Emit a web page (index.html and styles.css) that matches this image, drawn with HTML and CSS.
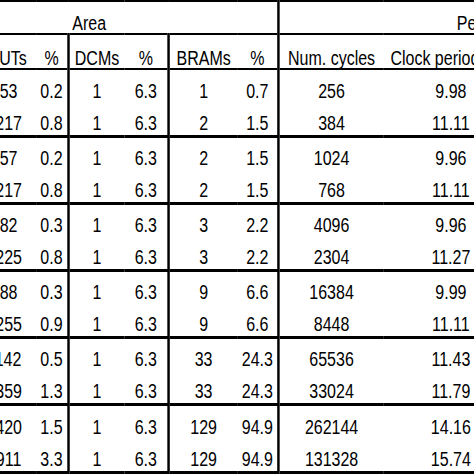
FILE: index.html
```html
<!DOCTYPE html>
<html>
<head>
<meta charset="utf-8">
<link rel="stylesheet" href="styles.css">
</head>
<body>
<div class="crop">
<table class="results">
  <colgroup>
    <col class="c-ff"><col class="c-lut"><col class="c-lutp">
    <col class="c-dcm"><col class="c-dcmp">
    <col class="c-bram"><col class="c-bramp">
    <col class="c-cyc"><col class="c-clk"><col class="c-time">
  </colgroup>
  <thead>
    <tr class="h1">
      <th colspan="7" class="grp">Area</th>
      <th colspan="3" class="grp sep">Performance</th>
    </tr>
    <tr class="h2">
      <th class="sep">FFs</th><th class="lut-h">LUTs</th><th>%</th>
      <th class="sep">DCMs</th><th>%</th>
      <th class="sep">BRAMs</th><th>%</th>
      <th class="sep">Num. cycles</th><th>Clock period (ns)</th><th class="sep">Time (µs)</th>
    </tr>
  </thead>
  <tbody>
    <tr><td class="sep">201</td><td>153</td><td>0.2</td><td class="sep">1</td><td>6.3</td><td class="sep">1</td><td>0.7</td><td class="sep">256</td><td>9.98</td><td class="sep">2.55</td></tr>
    <tr class="end"><td class="sep">534</td><td>1217</td><td>0.8</td><td class="sep">1</td><td>6.3</td><td class="sep">2</td><td>1.5</td><td class="sep">384</td><td>11.11</td><td class="sep">4.27</td></tr>
    <tr><td class="sep">209</td><td>157</td><td>0.2</td><td class="sep">1</td><td>6.3</td><td class="sep">2</td><td>1.5</td><td class="sep">1024</td><td>9.96</td><td class="sep">10.20</td></tr>
    <tr class="end"><td class="sep">542</td><td>1217</td><td>0.8</td><td class="sep">1</td><td>6.3</td><td class="sep">2</td><td>1.5</td><td class="sep">768</td><td>11.11</td><td class="sep">8.53</td></tr>
    <tr><td class="sep">217</td><td>182</td><td>0.3</td><td class="sep">1</td><td>6.3</td><td class="sep">3</td><td>2.2</td><td class="sep">4096</td><td>9.96</td><td class="sep">40.80</td></tr>
    <tr class="end"><td class="sep">550</td><td>1225</td><td>0.8</td><td class="sep">1</td><td>6.3</td><td class="sep">3</td><td>2.2</td><td class="sep">2304</td><td>11.27</td><td class="sep">25.97</td></tr>
    <tr><td class="sep">225</td><td>188</td><td>0.3</td><td class="sep">1</td><td>6.3</td><td class="sep">9</td><td>6.6</td><td class="sep">16384</td><td>9.99</td><td class="sep">163.68</td></tr>
    <tr class="end"><td class="sep">558</td><td>1255</td><td>0.9</td><td class="sep">1</td><td>6.3</td><td class="sep">9</td><td>6.6</td><td class="sep">8448</td><td>11.11</td><td class="sep">93.86</td></tr>
    <tr><td class="sep">233</td><td>1142</td><td>0.5</td><td class="sep">1</td><td>6.3</td><td class="sep">33</td><td>24.3</td><td class="sep">65536</td><td>11.43</td><td class="sep">749.08</td></tr>
    <tr class="end"><td class="sep">566</td><td>1359</td><td>1.3</td><td class="sep">1</td><td>6.3</td><td class="sep">33</td><td>24.3</td><td class="sep">33024</td><td>11.79</td><td class="sep">389.35</td></tr>
    <tr><td class="sep">241</td><td>2420</td><td>1.5</td><td class="sep">1</td><td>6.3</td><td class="sep">129</td><td>94.9</td><td class="sep">262144</td><td>14.16</td><td class="sep">3711.96</td></tr>
    <tr class="end"><td class="sep">574</td><td>4911</td><td>3.3</td><td class="sep">1</td><td>6.3</td><td class="sep">129</td><td>94.9</td><td class="sep">131328</td><td>15.74</td><td class="sep">2067.10</td></tr>
  </tbody>
</table>
</div>
</body>
</html>
```
FILE: styles.css
```css
html, body {
  margin: 0;
  padding: 0;
  background: #fff;
}

.crop {
  width: 474px;
  height: 474px;
  overflow: hidden;
}

/* Source table is set in a narrow sans; the whole table is compressed horizontally */
.results {
  margin-left: -100px;
  width: 1005px;
  table-layout: fixed;
  border-collapse: collapse;
  border-top: 2px solid #000;
  font-family: "Liberation Sans", Arial, sans-serif;
  font-size: 19.5px;
  color: #000;
  transform: scaleX(0.82);
  transform-origin: 0 0;
}

.c-ff { width: 91px; }
.c-lut { width: 73px; }
.c-lutp { width: 40px; }
.c-dcm { width: 68px; }
.c-dcmp { width: 54px; }
.c-bram { width: 84px; }
.c-bramp { width: 50px; }
.c-cyc { width: 128px; }
.c-clk { width: 166px; }
.c-time { width: 251px; }

.results th,
.results td {
  padding: 0;
  text-align: center;
  vertical-align: bottom;
  font-weight: normal;
  white-space: nowrap;
}

.results th {
  line-height: 20px;
}

.results td {
  line-height: 22px;
  padding-bottom: 1px;
}

.results td:nth-child(2) {
  padding-right: 4px;
}

.results .sep {
  border-left: 3px solid #000;
}

.results .h1 {
  height: 33px;
}

.results .h2 {
  height: 35px;
}

.results .h1 th,
.results .h2 th {
  border-bottom: 2px solid #000;
}

.results .lut-h {
  padding-left: 7px;
}

.results tbody tr {
  height: 33.6px;
}

.results tbody tr.end td {
  border-bottom: 3px solid #000;
}
```
